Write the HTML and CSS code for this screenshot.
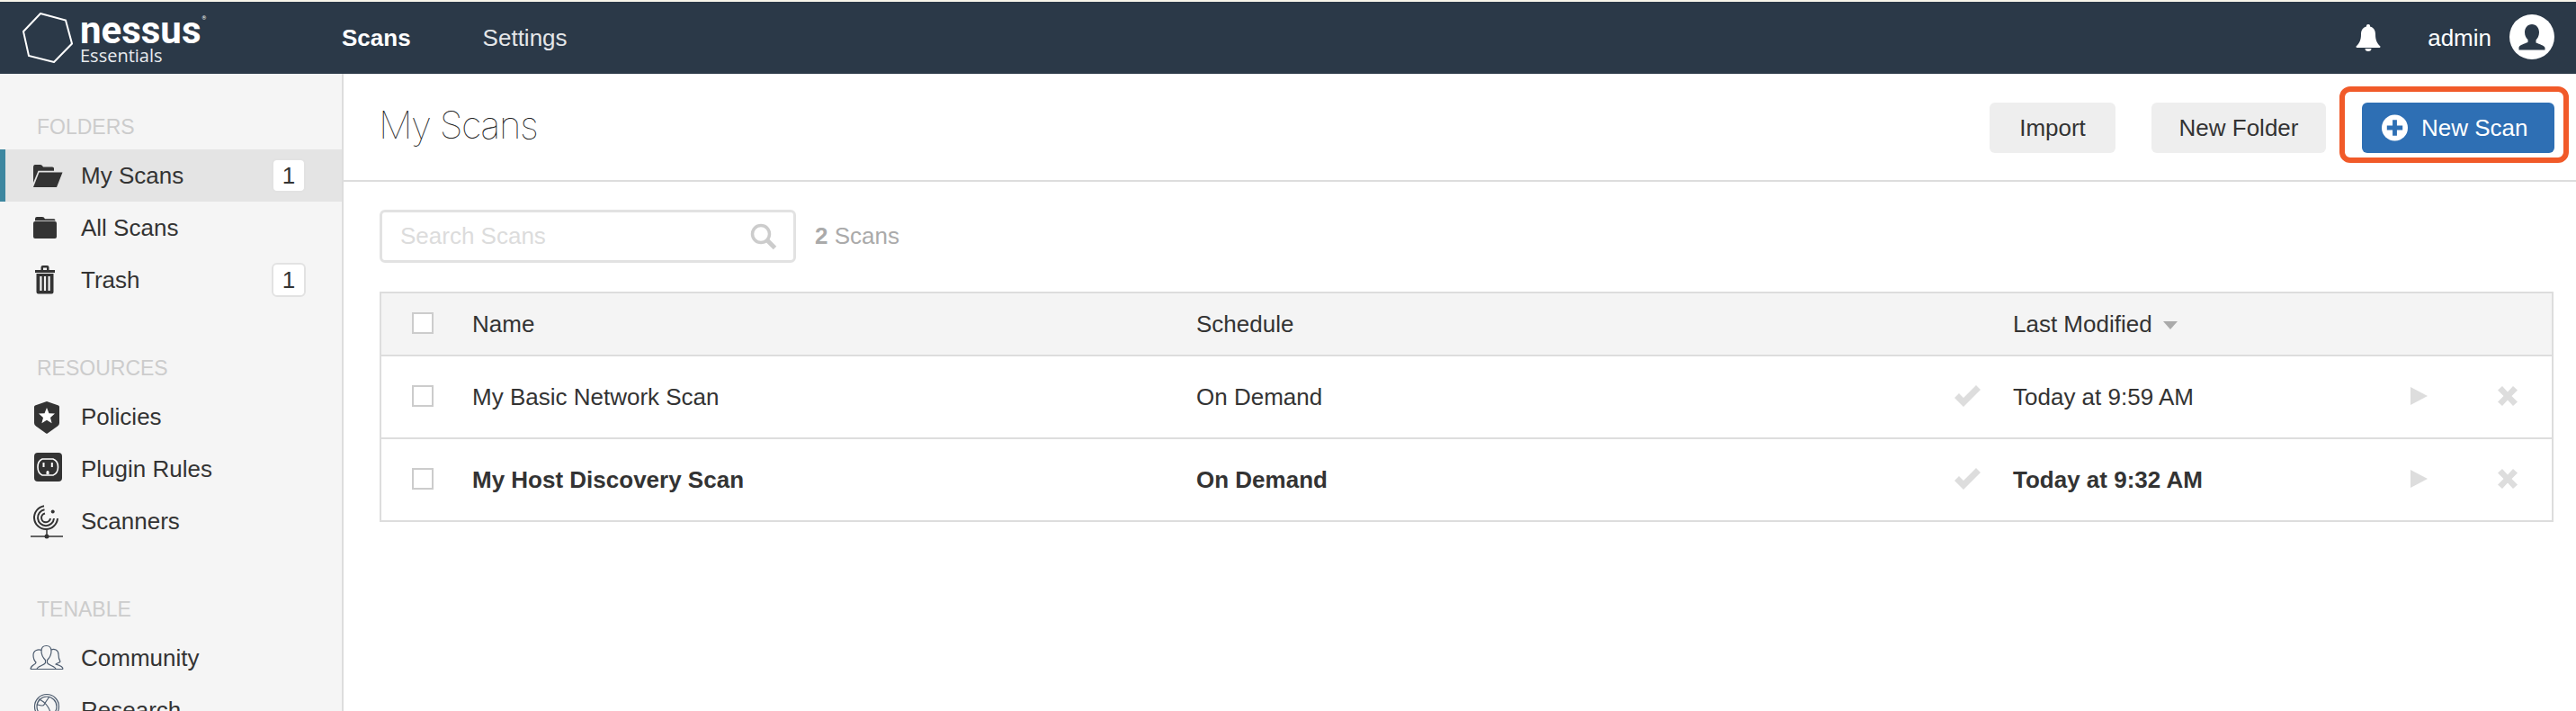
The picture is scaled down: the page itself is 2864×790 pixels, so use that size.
FILE: index.html
```html
<!DOCTYPE html>
<html lang="en">
<head>
<meta charset="utf-8">
<title>Nessus Essentials / Folders / My Scans</title>
<link rel="stylesheet" href="styles.css">
</head>
<body>
<div class="strip"></div>
<header class="topbar">
  <div class="logo">
    <svg class="hex" viewBox="0 0 56 56"><path d="M20 1 L48 8.500 L55 34.500 L35 55 L7 48 L1 21 Z"/></svg>
    <div class="wordmark">
      <div class="nessus">nessus<span class="reg">®</span></div>
      <div class="essentials">Essentials</div>
    </div>
  </div>
  <nav class="nav">
    <a class="nav-link nav-on">Scans</a>
    <a class="nav-link">Settings</a>
  </nav>
  <div class="user">
    <svg class="bell" viewBox="0 0 28 30"><path d="M14 0a2 2 0 0 1 2 2.400C20.500 3.500 22 7 22 11c0 6 1.500 10 5.500 13.500 0 1-.5 1.500-1.500 1.500H2c-1 0-1.500-.5-1.500-1.500C4.500 21 6 17 6 11c0-4 1.500-7.500 6-8.600A2 2 0 0 1 14 0z"/><path d="M10.500 27h7a3.500 3 0 0 1-7 0z"/></svg>
    <span class="admin">admin</span>
    <svg class="avatar" viewBox="0 0 50 50"><circle class="av-bg" cx="25" cy="25" r="25"/><path class="av-fg" d="M25 11c5 0 8 4 8 9 0 4-2 7-3.500 8.500v3c4 1.500 9 3 10 5.500v2.500H10.500V36.500c1-2.500 6-4 10-5.500v-3C19 26.500 17 24 17 20c0-5 3-9 8-9z"/></svg>
  </div>
</header>
<div class="shell">
  <aside class="side">
    <section class="group">
      <h3 class="group-title">FOLDERS</h3>
      <a class="item item-on">
        <svg class="ico" viewBox="0 0 36 36"><path d="M3 9q0-3 2-3h6q2 0 3 2.500h10q2 0 2 1.500v2.800H8.500L3 26z"/><path d="M9.500 14.500h26L29 31H3z"/></svg>
        <span class="label">My Scans</span><span class="badge">1</span>
      </a>
      <a class="item">
        <svg class="ico" viewBox="0 0 36 36"><path d="M5 10.200V8q0-2 2-2h6q2 0 3 2.300h10q1.500 0 1.500 1.900z"/><path d="M3 13q0-2 2-2h22q2 0 2 2v15q0 2-2 2H5q-2 0-2-2z"/></svg>
        <span class="label">All Scans</span>
      </a>
      <a class="item">
        <svg class="ico" viewBox="0 0 36 36"><path fill-rule="evenodd" d="M11.500 7V4q0-2 2-2h5q2 0 2 2v3H27v3H5V7zM14 7h4V4.500h-4z"/><path fill-rule="evenodd" d="M6.500 11h19v20.500q0 2-2 2h-15q-2 0-2-2zM10.300 14v16h2.200V14zM14.900 14v16h2.200V14zM19.500 14v16h2.200V14z"/></svg>
        <span class="label">Trash</span><span class="badge">1</span>
      </a>
    </section>
    <section class="group">
      <h3 class="group-title">RESOURCES</h3>
      <a class="item">
        <svg class="ico" viewBox="0 0 36 36"><path d="M18 1L31 5.500Q32 6 32 7V25Q32 27 30 28.500L18.500 36.700Q18 37 17.500 36.700L6 28.500Q4 27 4 25V7Q4 6 5 5.500z"/><path class="knock" d="M18 8l2.500 6.200 6.500.4-5 4.300 1.600 6.400-5.600-3.500-5.600 3.500 1.600-6.400-5-4.300 6.500-.4z"/></svg>
        <span class="label">Policies</span>
      </a>
      <a class="item">
        <svg class="ico" viewBox="0 0 36 36"><rect x="4" y="0" width="31" height="32" rx="4"/><path class="knock-line" d="M13 7h12q5.500 2 5.500 9T25 25H13q-5-2-5-9t5-9z"/><rect class="knock" x="13.500" y="11" width="2" height="5"/><rect class="knock" x="22.800" y="11" width="2" height="5"/><path class="knock" d="M17.500 24v-2.500a1.500 1.500 0 0 1 3 0V24z"/></svg>
        <span class="label">Plugin Rules</span>
      </a>
      <a class="item">
        <svg class="ico" viewBox="0 0 36 36"><path class="line" d="M15 1.200A13 13 0 1 0 30 15"/><path class="line" d="M15.500 5.300A9 9 0 1 0 26 15"/><path class="line" d="M16 9.400A5 5 0 1 0 22 15"/><circle cx="24.700" cy="7.500" r="2"/><path class="line thin" d="M18 27v8M0 35h36"/><circle cx="18" cy="35" r="2.500"/></svg>
        <span class="label">Scanners</span>
      </a>
    </section>
    <section class="group">
      <h3 class="group-title">TENABLE</h3>
      <a class="item">
        <svg class="ico ico-line" viewBox="0 0 36 36"><path d="M0 30.500h36"/><path d="M7 30.500c0-3 8-4 9.500-7v-3c-3-3-4.500-6-4.500-10 0-4 2-6 5.500-6s5.500 2 5.500 6c0 4-1.500 7-4.500 10v3c1.500 3 9.500 4 9.500 7"/><path d="M12 9.500C9 8 3 9 3 15c0 3 1 6 3 8 0 2.500-6 3-6 7.500"/><path d="M23 9c3-1.500 8 0 8 5 0 3 0 5 2 8-1 2-4 1.500-5 3 3 1 8 2 8 5.500"/></svg>
        <span class="label">Community</span>
      </a>
      <a class="item">
        <svg class="ico ico-line" viewBox="0 0 36 36"><circle cx="18" cy="14" r="13.500"/><circle cx="18" cy="14" r="11"/><path d="M9 6q6 2 10 8t3 11M8 12q6 2 7 0t6-9"/></svg>
        <span class="label">Research</span>
      </a>
    </section>
  </aside>
  <main class="main">
    <div class="page-head">
      <h1 class="title">My Scans</h1>
      <div class="actions">
        <button class="btn btn-import">Import</button>
        <button class="btn btn-folder">New Folder</button>
        <button class="btn btn-blue">
          <svg class="plus" viewBox="0 0 30 30"><circle class="plus-bg" cx="15" cy="15" r="15"/><path class="plus-fg" d="M12.500 6h5v6.500H24v5h-6.500V24h-5v-6.500H6v-5h6.500z"/></svg>
          New Scan
        </button>
      </div>
    </div>
    <div class="filter">
      <div class="search">
        <span class="placeholder">Search Scans</span>
        <svg class="lens" viewBox="0 0 30 30"><circle cx="12" cy="12" r="9.500"/><path d="M19 19l8.500 8.500"/></svg>
      </div>
      <div class="count"><b>2</b> Scans</div>
    </div>
    <div class="table">
      <div class="row row-head">
        <span class="cb"></span><span>Name</span><span>Schedule</span><span></span>
        <span class="sort">Last Modified<i class="caret"></i></span><span></span><span></span>
      </div>
      <div class="row">
        <span class="cb"></span><span>My Basic Network Scan</span><span>On Demand</span>
        <svg class="check" viewBox="0 0 29 24"><path d="M0 14l5-5 5 5L24 0l5 5-19 19z"/></svg>
        <span>Today at 9:59 AM</span>
        <svg class="play" viewBox="0 0 19 20"><path d="M0 0l19 10L0 20z"/></svg>
        <svg class="del" viewBox="0 0 22 22"><path d="M5 0l6 6.500L17 0l5 4.500L15.500 11 22 17.500 17 22l-6-6.500L5 22l-5-4.500L6.500 11 0 4.500z"/></svg>
      </div>
      <div class="row row-bold">
        <span class="cb"></span><span>My Host Discovery Scan</span><span>On Demand</span>
        <svg class="check" viewBox="0 0 29 24"><path d="M0 14l5-5 5 5L24 0l5 5-19 19z"/></svg>
        <span>Today at 9:32 AM</span>
        <svg class="play" viewBox="0 0 19 20"><path d="M0 0l19 10L0 20z"/></svg>
        <svg class="del" viewBox="0 0 22 22"><path d="M5 0l6 6.500L17 0l5 4.500L15.500 11 22 17.500 17 22l-6-6.500L5 22l-5-4.500L6.500 11 0 4.500z"/></svg>
      </div>
    </div>
  </main>
</div>
<div class="callout"></div>
</body>
</html>
```

FILE: styles.css
```css
* { box-sizing: border-box; }
html, body { margin: 0; height: 790px; overflow: hidden; }
body {
  position: relative;
  background: #fff;
  color: #333;
  font-family: "Liberation Sans", Arial, sans-serif;
  font-size: 26px;
}
.strip { height: 2px; background: #f8f5ea; }

/* top bar */
.topbar {
  height: 80px;
  background: #2b3948;
  display: flex;
  align-items: center;
  color: #fff;
}
.logo {
  width: 380px;
  height: 80px;
  padding-left: 25px;
  display: flex;
  align-items: flex-start;
  gap: 8px;
}
.hex { width: 56px; height: 56px; margin-top: 12px; flex: none; }
.hex path { fill: none; stroke: #fff; stroke-width: 2; }
.wordmark { padding-top: 12px; }
.nessus {
  font-family: Roboto, sans-serif;
  font-weight: 700;
  font-size: 42px;
  line-height: 40px;
  position: relative;
}
.reg { position: absolute; font-size: 6px; line-height: 8px; top: 2px; margin-left: 1px; font-weight: 400; }
.essentials {
  font-family: "Open Sans", sans-serif;
  font-size: 20px;
  line-height: 16px;
  color: #e8ebee;
}
.nav { display: flex; gap: 80px; flex: 1; }
.nav-link { color: #e4e6e8; }
.nav-on { color: #fff; font-weight: 700; }
.user { display: flex; align-items: center; padding-right: 24px; }
.bell { width: 28px; height: 30px; fill: #fff; margin-right: 52px; }
.admin { margin-right: 20px; }
.avatar { width: 50px; height: 50px; margin-top: -2px; }
.av-bg { fill: #fff; }
.av-fg { fill: #2b3948; }

/* shell */
.shell { display: flex; height: 708px; }
.side {
  width: 382px;
  flex: none;
  background: #f5f5f5;
  border-right: 2px solid #ddd;
  padding-top: 39px;
  overflow: hidden;
}
.group { margin-bottom: 49px; }
.group-title {
  margin: 0 0 5px 41px;
  height: 40px;
  line-height: 40px;
  font-size: 23px;
  font-weight: 400;
  color: #ccc;
}
.item {
  height: 58px;
  display: flex;
  align-items: center;
  padding-left: 34px;
  color: #333;
}
.item-on { background: #e4e4e4; border-left: 6px solid #3d87a0; padding-left: 28px; }
.ico { width: 36px; height: 36px; flex: none; fill: #333; overflow: visible; }
.knock { fill: #fff; }
.knock-line { fill: none; stroke: #fff; stroke-width: 1.600; }
.line { fill: none; stroke: #333; stroke-width: 2; }
.thin { stroke-width: 1.500; }
.ico-line { fill: none; stroke: #4d5c6f; stroke-width: 1.200; }
.label { margin-left: 20px; flex: 1; }
.badge {
  width: 38px;
  height: 38px;
  margin-right: 40px;
  background: #fff;
  border: 2px solid #e2e2e2;
  border-radius: 6px;
  display: flex;
  align-items: center;
  justify-content: center;
}

/* main */
.main { flex: 1; min-width: 0; }
.page-head {
  height: 120px;
  border-bottom: 2px solid #ddd;
  padding: 0 24px 0 39px;
  display: flex;
  align-items: flex-start;
  justify-content: space-between;
}
.title {
  margin: 32px 0 0;
  font-family: Inter, sans-serif;
  font-weight: 100;
  font-size: 42px;
  line-height: 50px;
  letter-spacing: -1.500px;
  color: #222;
}
.actions { display: flex; gap: 40px; margin-top: 32px; }
.btn {
  height: 56px;
  border: 0;
  border-radius: 6px;
  background: #eee;
  color: #333;
  font: inherit;
  padding: 0;
}
.btn-import { width: 140px; }
.btn-folder { width: 194px; }
.btn-blue {
  width: 214px;
  background: #2e6fb4;
  color: #fff;
  display: flex;
  align-items: center;
  padding-left: 22px;
  gap: 15px;
}
.plus { width: 29px; height: 30px; }
.plus-bg { fill: #fff; }
.plus-fg { fill: #2e6fb4; }

.filter { display: flex; align-items: center; margin: 31px 0 32px 40px; }
.search {
  width: 463px;
  height: 59px;
  border: 3px solid #e2e2e2;
  border-radius: 6px;
  padding: 0 18px 0 20px;
  display: flex;
  align-items: center;
  justify-content: space-between;
}
.placeholder { color: #dcdcdc; }
.lens { width: 30px; height: 30px; }
.lens circle, .lens path { fill: none; stroke: #ccc; stroke-width: 3.500; }
.lens path { stroke-width: 5; }
.count { margin-left: 21px; color: #aaa; }

.table { margin: 0 25px 0 40px; border: 2px solid #ddd; border-bottom-width: 0; }
.row {
  display: grid;
  grid-template-columns: 101px 805px 843px 65px 442px 97px 1fr;
  align-items: center;
  height: 92px;
  border-bottom: 2px solid #ddd;
}
.row-head { height: 70px; background: #f4f4f4; }
.row-bold { font-weight: 700; }
.cb {
  width: 24px;
  height: 24px;
  margin: -2px 0 0 34px;
  background: #fff;
  border: 2px solid #ccc;
}
.sort { display: flex; align-items: center; }
.caret {
  width: 0;
  height: 0;
  margin: 3px 0 0 12px;
  border: 8px solid transparent;
  border-top: 9px solid #aaa;
  border-bottom: 0;
}
.check { width: 29px; height: 24px; fill: #ddd; margin-top: -2px; }
.play { width: 19px; height: 20px; fill: #ddd; margin-top: -2px; }
.del { width: 22px; height: 22px; fill: #ddd; margin-top: -2px; }

/* annotation drawn over the screenshot */
.callout {
  position: absolute;
  left: 2601px;
  top: 96px;
  width: 255px;
  height: 85px;
  border: 6px solid #f15a29;
  border-radius: 12px;
}
```
